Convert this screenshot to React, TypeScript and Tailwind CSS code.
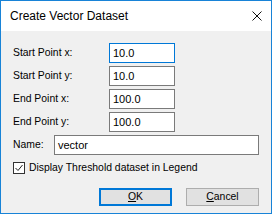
const fields = [
    { label: 'Start Point x:', value: '10.0', focused: true },
    { label: 'Start Point y:', value: '10.0' },
    { label: 'End Point x:', value: '100.0' },
    { label: 'End Point y:', value: '100.0' },
]

const font = { fontFamily: '"Liberation Sans", Arial, sans-serif' }

const App = () => {
    return (
        <div
            className="w-[272px] h-[214px] border border-[#1883d7] bg-[#f0f0f0] flex flex-col text-black"
            style={font}
        >
            {/* title bar */}
            <div className="h-[30px] bg-white flex items-center justify-between pl-[9px] pr-[9px]">
                <span className="text-[12px] leading-none">Create Vector Dataset</span>
                <svg width="10" height="10" viewBox="0 0 10 10" className="block">
                    <path d="M0.5 0.5 L9.5 9.5 M9.5 0.5 L0.5 9.5" stroke="#111" strokeWidth="1" fill="none" />
                </svg>
            </div>

            <div className="flex-1 px-[12px] pt-[12px] text-[10.4px]">
                {fields.map((f, i) => (
                    <div key={i} className="flex items-center h-[20px] mb-[3px]">
                        <span className="w-[96px]">{f.label}</span>
                        <div
                            className={
                                f.focused
                                    ? 'w-[66px] h-[20px] bg-white border border-[#0078d7] flex items-center pl-[3px] text-[11px]'
                                    : 'w-[66px] h-[20px] bg-white border border-[#7a7a7a] flex items-center pl-[3px] text-[11px]'
                            }
                        >
                            {f.value}
                        </div>
                    </div>
                ))}

                <div className="flex items-center h-[20px]">
                    <span className="w-[41px]">Name:</span>
                    <div className="w-[205px] h-[20px] bg-white border border-[#7a7a7a] flex items-center pl-[3px] text-[11px]">
                        vector
                    </div>
                </div>

                <div className="flex items-center mt-[6px] h-[13px]">
                    <div className="w-[12px] h-[12px] bg-white border border-[#333] flex items-center justify-center">
                        <svg width="10" height="10" viewBox="0 0 10 10" className="block">
                            <path d="M1.5 5 L4 7.5 L8.5 2" stroke="#222" strokeWidth="1" fill="none" />
                        </svg>
                    </div>
                    <span className="ml-[4px]">Display Threshold dataset in Legend</span>
                </div>

                <div className="flex justify-end gap-[14px] mt-[14px]">
                    <div className="w-[73px] h-[18px] bg-[#e1e1e1] border-2 border-[#0078d7] flex items-center justify-center">
                        <span><span className="underline">O</span>K</span>
                    </div>
                    <div className="w-[73px] h-[18px] bg-[#e1e1e1] border border-[#adadad] flex items-center justify-center">
                        <span><span className="underline">C</span>ancel</span>
                    </div>
                </div>
            </div>
        </div>
    );
};

export default App;
